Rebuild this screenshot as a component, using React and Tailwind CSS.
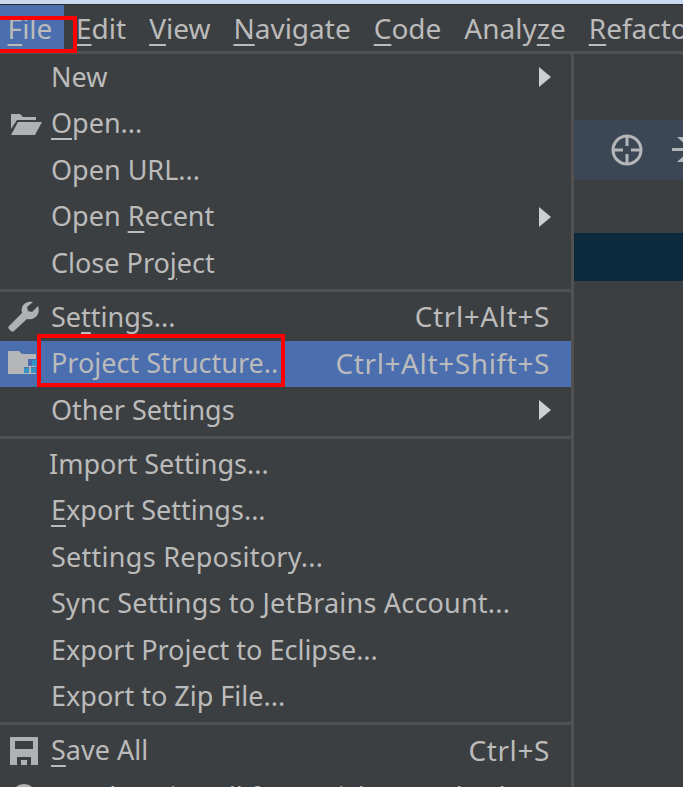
import React from 'react';

const font = { fontFamily: '"Noto Sans", sans-serif' };

function Label({ before = '', mnemonic = '', after = '' }) {
  return (
    <span className="whitespace-nowrap">
      {before}
      <span className="underline decoration-2 underline-offset-[5px]">{mnemonic}</span>
      {after}
    </span>
  );
}

function FolderOpenIcon() {
  return (
    <svg width="32" height="24" viewBox="0 0 32 24" fill="#afb1b3" className="ml-[2px]">
      <path d="M1 2h9l3 3h13v3H7L1 17z" />
      <path d="M8 10h24l-7 13H1z" />
    </svg>
  );
}

function WrenchIcon() {
  return (
    <svg width="32" height="32" viewBox="0 0 32 32" fill="#afb1b3">
      <path d="M30 5l-6 6-4-1-1-4 6-5c-5-1-10 1-11 6-1 2 0 4 0 5L1 25c-1 1-1 2 0 3l2 2c1 1 2 1 3 0l13-12c5 1 9-1 11-5 1-3 1-6 0-8z" />
    </svg>
  );
}

function ProjectIcon() {
  return (
    <svg width="30" height="26" viewBox="0 0 30 26">
      <path d="M0 0h11l3 3h14v20H0z" fill="#b4b6b8" />
      <path d="M20 8h8v7h-8zM16 16h5v6h-5zM23 16h6v6h-6z" fill="#4b6eaf" />
      <path d="M24 9h5v6h-5zM16 17h5v5h-5zM23 17h5v5h-5z" fill="#3592c4" />
    </svg>
  );
}

function SaveIcon() {
  return (
    <svg width="28" height="28" viewBox="0 0 28 28" fill="#afb1b3" fillRule="evenodd" className="ml-[2px]">
      <path d="M0 0h28v28H0zM5 4v8h18V4zM7 20v8h14v-8zM11 23h6v5h-6z" />
    </svg>
  );
}

function SyncIcon() {
  return (
    <svg width="28" height="28" viewBox="0 0 28 28" fill="none" stroke="#afb1b3" strokeWidth="4" className="ml-[2px]">
      <circle cx="14" cy="14" r="11" />
    </svg>
  );
}

function Row({ icon, label, shortcut, arrow, active, indent = 'pl-[51px]', labelClass = '' }) {
  return (
    <div className={`relative flex h-[46.5px] items-center pr-[21px] ${indent} ${active ? 'bg-[#4b6eaf]' : ''}`}>
      {icon && <span className="absolute left-[8px] top-1/2 flex -translate-y-1/2 items-center">{icon}</span>}
      <span className={`flex-1 pb-[2px] ${labelClass}`}>{label}</span>
      {shortcut && <span className="whitespace-nowrap pb-[2px] text-[28px] tracking-[0.6px]">{shortcut}</span>}
      {arrow && (
        <svg width="12" height="20" viewBox="0 0 12 20" fill="#cdcfd2" className="mr-[-1px]">
          <path d="M0 0l12 10L0 20z" />
        </svg>
      )}
    </div>
  );
}

function Separator({ className }) {
  return <div className={`h-[3px] bg-[#515151] ${className}`} />;
}

function Gap() {
  return (
    <div className="flex h-[7.5px] items-center">
      <Separator className="w-full" />
    </div>
  );
}

export default function App() {
  return (
    <div className="relative h-[787px] w-[683px] overflow-hidden bg-[#3c3f41] text-[27px] leading-none text-[#bbbbbb]" style={font}>
      {/* Window title strip */}
      <div className="h-[4px] bg-[#c9daf0]" />
      <div className="h-[1px] bg-[#2b2d2e]" />

      {/* Menu bar */}
      <div className="flex h-[46px] items-center text-[28px]">
        <div className="flex h-full w-[64px] shrink-0 items-center justify-center bg-[#4b6eaf] pr-[4px]">
          <Label mnemonic="F" after="ile" />
        </div>
        <div className="flex gap-[23px] pl-[12px]">
          <Label mnemonic="E" after="dit" />
          <Label mnemonic="V" after="iew" />
          <Label mnemonic="N" after="avigate" />
          <Label mnemonic="C" after="ode" />
          <Label before="Analy" mnemonic="z" after="e" />
          <Label mnemonic="R" after="efactor" />
        </div>
      </div>
      <Separator className="w-full" />

      <div className="flex">
        {/* File menu */}
        <div className="w-[571px] shrink-0">
          <Row label="New" arrow />
          <Row icon={<FolderOpenIcon />} label={<Label mnemonic="O" after="pen..." />} />
          <Row label="Open URL..." />
          <Row label={<Label before="Open " mnemonic="R" after="ecent" />} arrow />
          <Row label={<Label before="Close Pro" mnemonic="j" after="ect" />} />
          <Gap />
          <Row
            icon={<WrenchIcon />}
            label={<Label before="Se" mnemonic="t" after="tings..." />}
            shortcut="Ctrl+Alt+S"
          />
          <Row icon={<ProjectIcon />} label="Project Structure.." shortcut="Ctrl+Alt+Shift+S" active />
          <Row label="Other Settings" arrow />
          <Gap />
          <Row label="Import Settings..." indent="pl-[49px]" />
          <Row label={<Label mnemonic="E" after="xport Settings..." />} />
          <Row label="Settings Repository..." labelClass="tracking-[0.27px]" />
          <Row label="Sync Settings to JetBrains Account..." labelClass="tracking-[0.2px]" />
          <Row label="Export Project to Eclipse..." />
          <Row label="Export to Zip File..." />
          <Gap />
          <Row icon={<SaveIcon />} label={<Label mnemonic="S" after="ave All" />} shortcut="Ctrl+S" />
          <Row icon={<SyncIcon />} label="Synchronize All from Disk" shortcut="Ctrl+Alt+Y" />
        </div>

        {/* Panel behind the menu */}
        <div className="flex-1 border-l-[3px] border-[#515151]">
          <div className="h-[66px]" />
          <div className="flex h-[60px] items-center overflow-hidden bg-[#3b4754] pl-[37px]">
            <svg width="32" height="32" viewBox="0 0 32 32" fill="none" stroke="#b4b6b8" strokeWidth="3" className="shrink-0">
              <circle cx="16" cy="16" r="14" />
              <path d="M16 2v10M16 20v10M2 16h10M20 16h10" />
            </svg>
            <svg width="30" height="32" viewBox="0 0 30 32" fill="#b4b6b8" className="ml-[29px] shrink-0">
              <path d="M0 14h30v3H0zM5 3l10 9 10-9zM5 28l10-9 10 9z" />
            </svg>
          </div>
          <div className="h-[53px]" />
          <div className="h-[48px] bg-[#0d293e]" />
        </div>
      </div>

      {/* Red annotation boxes */}
      <div className="absolute left-[-4px] top-[16px] h-[37px] w-[81px] border-[4px] border-[#ff0000]" />
      <div className="absolute left-[37px] top-[334px] h-[53px] w-[248px] border-[4px] border-[#ff0000]" />
    </div>
  );
}
